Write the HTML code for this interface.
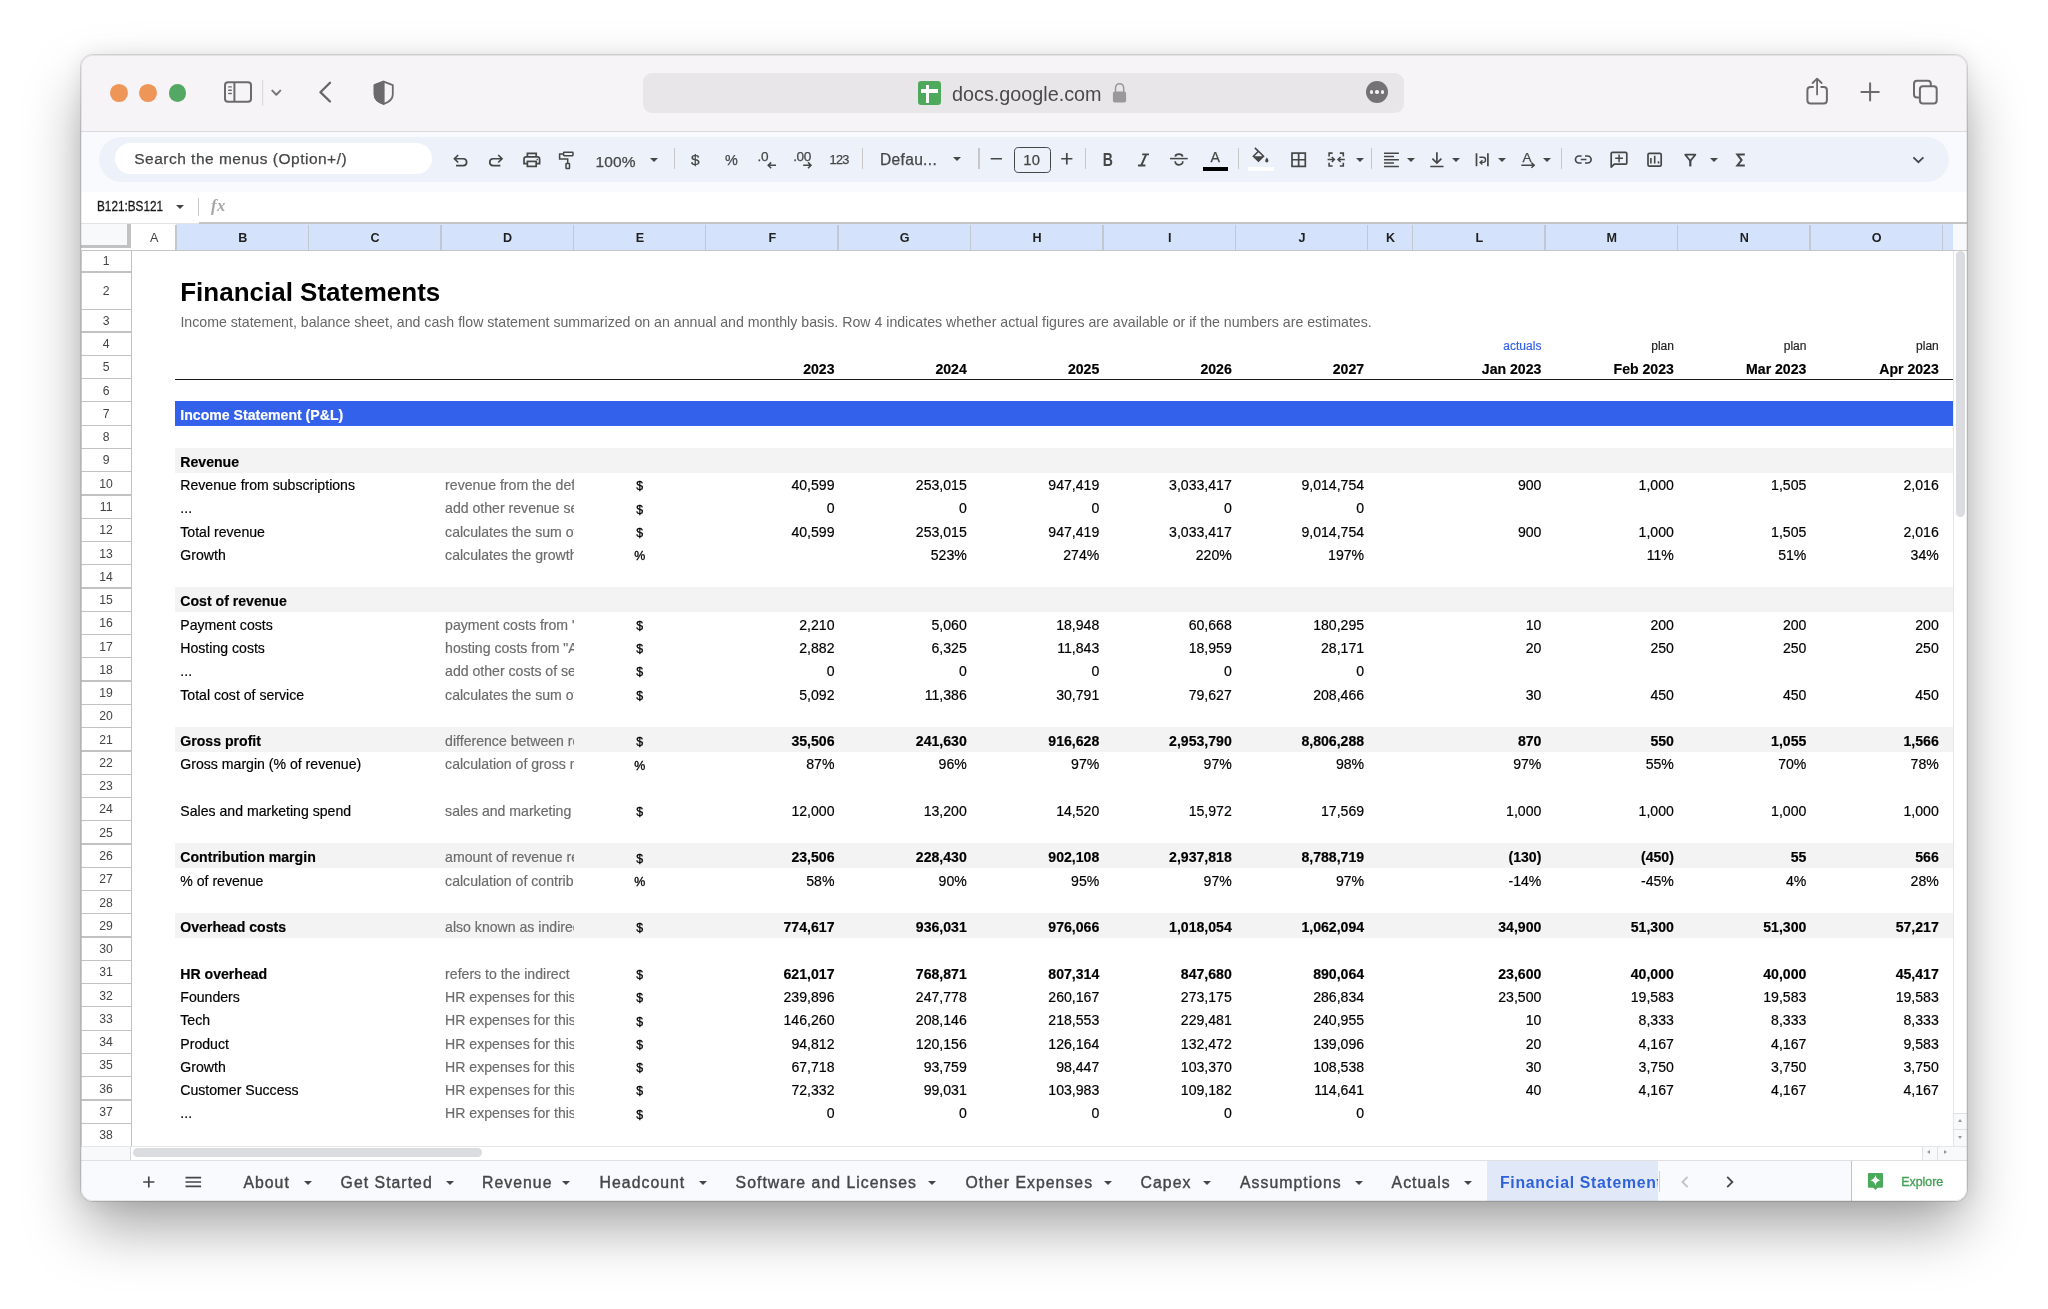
<!DOCTYPE html>
<html lang="en"><head><meta charset="utf-8"><title>Financial Statements - Google Sheets</title>
<style>

html,body{margin:0;padding:0;background:#fff;}
body{width:2048px;height:1309px;position:relative;overflow:hidden;font-family:"Liberation Sans",sans-serif;color:#000;}
.shadow{position:absolute;left:81px;top:55px;width:1886px;height:1146px;border-radius:12px;
  box-shadow:0 0 0 1px rgba(0,0,0,.12),0 29px 60px -4px rgba(0,0,0,.37),0 0 20px rgba(0,0,0,.08);background:#fff;}
.ring{position:absolute;left:81px;top:55px;width:1886px;height:1146px;border-radius:12px;box-shadow:inset 0 0 0 1px rgba(0,0,0,.07);pointer-events:none;}
.clip{will-change:transform;position:absolute;left:0;top:0;width:2048px;height:1309px;clip-path:inset(55px 81px 108px 81px round 12px);background:#fff;}
.a{position:absolute;}
.t{position:absolute;white-space:nowrap;line-height:1;}
svg{position:absolute;overflow:visible;}
.c{position:absolute;white-space:nowrap;font-size:14.1px;line-height:16px;height:16px;-webkit-text-stroke:.18px currentColor;}
.r{text-align:right;}
.b{font-weight:700;}
.g{color:#6c6c6c;overflow:hidden;}
.rn{position:absolute;left:81.6px;width:49px;text-align:center;font-size:12.2px;color:#444;line-height:14px;height:14px;}
.rl{position:absolute;left:81px;width:50px;height:1.3px;background:#c2c2c2;}
.ch{position:absolute;top:225px;height:26px;text-align:center;font-size:12.6px;line-height:26px;color:#1f1f1f;font-weight:700;}
.cl{position:absolute;top:225px;width:1.4px;height:24.5px;background:#c3c7cf;}
.ic{stroke:#444746;fill:none;stroke-width:1.7;stroke-linecap:butt;stroke-linejoin:miter;}
.if{fill:#444746;stroke:none;}
.sep{position:absolute;top:148px;width:1.2px;height:21px;background:#c7c7c7;}
.tb{position:absolute;white-space:nowrap;line-height:1;color:#444746;font-size:15.5px;-webkit-text-stroke:.25px #444746;}
.tab{position:absolute;top:1173.3px;white-space:nowrap;line-height:20px;height:20px;color:#444746;font-size:15.8px;letter-spacing:1.03px;-webkit-text-stroke:.4px #444746;}
.tri{position:absolute;width:0;height:0;border-left:4.3px solid transparent;border-right:4.3px solid transparent;border-top:4.4px solid #444746;}

</style></head>
<body>
<div class="shadow"></div>
<div class="clip">
<div class="a" style="left:81px;top:54px;width:1886px;height:77px;background:#f7f4f7;"></div>
<div class="a" style="left:81px;top:130.6px;width:1886px;height:1.2px;background:#dedbde;"></div>
<div class="a" style="left:110.3px;top:84.2px;width:17.8px;height:17.8px;border-radius:50%;background:#ee9558;"></div>
<div class="a" style="left:139.4px;top:84.2px;width:17.8px;height:17.8px;border-radius:50%;background:#ee9558;"></div>
<div class="a" style="left:168.6px;top:84.2px;width:17.8px;height:17.8px;border-radius:50%;background:#53a863;"></div>
<svg style="left:0;top:0" width="2048" height="140" viewBox="0 0 2048 140">
<g fill="none" stroke="#6b6b6b" stroke-width="2" stroke-linecap="round" stroke-linejoin="round">
<rect x="225" y="82.2" width="26" height="19.6" rx="3"/>
<path d="M234.4 82.4V101.6" stroke-linecap="butt"/>
<path d="M228.7 86.9H231.3M228.7 90.2H231.3M228.7 93.5H231.3" stroke-width="1.4"/>
<path d="M272.3 90.6L276.3 94.7L280.3 90.6" stroke="#777" stroke-width="2"/>
<path d="M330 82.8L320.4 92.2L330 101.5" stroke="#666" stroke-width="2.3"/>
</g>
<path d="M262.6 80V105.5" stroke="#dcd9dc" stroke-width="1.2"/>
<!-- shield -->
<path d="M383.7 81.6 L392.8 85.2 V94.5 C392.8 99.2 388.6 102.2 383.7 103.9 C378.8 102.2 374.6 99.2 374.6 94.5 V85.2 Z" fill="none" stroke="#6b6b6b" stroke-width="1.8" stroke-linejoin="round"/>
<path d="M383.7 81.6 L374.6 85.2 V94.5 C374.6 99.2 378.8 102.2 383.7 103.9 Z" fill="#6b6b6b" stroke="#6b6b6b" stroke-width="1.8" stroke-linejoin="round"/>
<!-- share -->
<g fill="none" stroke="#6b6b6b" stroke-width="2" stroke-linecap="round" stroke-linejoin="round">
<path d="M1813 87H1810.6C1808.8 87 1807.4 88.4 1807.4 90.2V100.2C1807.4 102 1808.8 103.4 1810.6 103.4H1823.7C1825.5 103.4 1826.9 102 1826.9 100.2V90.2C1826.9 88.4 1825.5 87 1823.7 87H1821.3"/>
<path d="M1817.1 94.4V79.2M1812.6 83L1817.1 78.6L1821.6 83" stroke-width="1.8"/>
<path d="M1861.4 91.9H1878.8M1870.1 83.2V100.6"/>
<rect x="1914" y="80.8" width="16.8" height="16.8" rx="3"/>
<rect x="1919.9" y="86.3" width="16.8" height="17.1" rx="3" fill="#f7f4f7"/>
</g>
</svg>
<div class="a" style="left:643px;top:73px;width:761px;height:40px;border-radius:9px;background:#e9e6ea;"></div>
<div class="a" style="left:917.8px;top:81.4px;width:23.2px;height:23.4px;border-radius:3.2px;background:#4fa95c;"></div>
<div class="a" style="left:925.8px;top:84.6px;width:3.1px;height:18px;background:#fff;"></div>
<div class="a" style="left:920.9px;top:89.3px;width:17.1px;height:3.5px;background:#fff;"></div>
<div class="t" style="left:952px;top:82.6px;font-size:19.8px;color:#4a4a4a;line-height:23px;">docs.google.com</div>
<svg style="left:1108px;top:80px" width="24" height="26" viewBox="1108 80 24 26">
<rect x="1112.9" y="91.4" width="13.2" height="11.2" rx="2" fill="#9a989b"/>
<path d="M1115.5 92V88.6C1115.5 85.6 1117.2 83.7 1119.6 83.7C1122 83.7 1123.7 85.6 1123.7 88.6V92" fill="none" stroke="#9a989b" stroke-width="1.5"/>
</svg>
<div class="a" style="left:1365.8px;top:81px;width:22.2px;height:22.2px;border-radius:50%;background:#737373;"></div>
<div class="a" style="left:1369.9px;top:90.4px;width:3.4px;height:3.4px;border-radius:50%;background:#f4f1f4;"></div>
<div class="a" style="left:1375.2px;top:90.4px;width:3.4px;height:3.4px;border-radius:50%;background:#f4f1f4;"></div>
<div class="a" style="left:1380.5px;top:90.4px;width:3.4px;height:3.4px;border-radius:50%;background:#f4f1f4;"></div>
<div class="a" style="left:81px;top:131.8px;width:1886px;height:60px;background:#f9fafd;"></div>
<div class="a" style="left:99px;top:137.2px;width:1850px;height:45.2px;border-radius:22.6px;background:#edf1fa;"></div>
<div class="a" style="left:115px;top:143px;width:317px;height:31px;border-radius:15.5px;background:#fff;"></div>
<div class="tb" style="left:134.2px;top:150.6px;letter-spacing:.5px;font-size:15.5px;">Search the menus (Option+/)</div>
<div class="sep" style="left:673.6px;"></div>
<div class="sep" style="left:861.7px;"></div>
<div class="sep" style="left:978.4px;"></div>
<div class="sep" style="left:1085.0px;"></div>
<div class="sep" style="left:1237.8px;"></div>
<div class="sep" style="left:1371.0px;"></div>
<div class="sep" style="left:1560.9px;"></div>
<div class="tri" style="left:952.6px;top:156.8px;"></div>
<div class="tri" style="left:649.9px;top:157.8px;"></div>
<div class="tri" style="left:1355.6px;top:157.8px;"></div>
<div class="tri" style="left:1406.8px;top:157.8px;"></div>
<div class="tri" style="left:1451.9px;top:157.8px;"></div>
<div class="tri" style="left:1497.7px;top:157.8px;"></div>
<div class="tri" style="left:1542.9px;top:157.8px;"></div>
<div class="tri" style="left:1709.8px;top:157.8px;"></div>
<div class="tb" style="left:595.6px;top:153.6px;font-size:15.5px;letter-spacing:.1px;">100%</div>
<div class="tb" style="left:691px;top:152.2px;font-size:15.4px;">$</div>
<div class="tb" style="left:725px;top:152.6px;font-size:14.4px;letter-spacing:-.3px;">%</div>
<div class="tb" style="left:757.6px;top:149.6px;font-size:13.6px;letter-spacing:-.4px;">.0</div>
<div class="tb" style="left:793.2px;top:149.6px;font-size:13.6px;letter-spacing:-.4px;">.00</div>
<div class="tb" style="left:829.6px;top:153.6px;font-size:12.7px;letter-spacing:-.75px;">123</div>
<div class="tb" style="left:880px;top:152.4px;font-size:15.6px;letter-spacing:.3px;">Defau...</div>
<div class="a" style="left:1013.8px;top:146.6px;width:35.4px;height:24px;border:1.2px solid #444746;border-radius:4.6px;"></div>
<div class="tb" style="left:1023.2px;top:153.4px;font-size:14.8px;letter-spacing:.3px;">10</div>
<div class="a" style="left:1203px;top:166.6px;width:25.2px;height:4.2px;background:#000;"></div>
<div class="a" style="left:1248.4px;top:166.5px;width:25.6px;height:4.3px;background:#fff;"></div>
<div class="tb" style="left:1210.4px;top:149.6px;font-size:14.2px;">A</div>
<div class="tb" style="left:1522.6px;top:150.8px;font-size:13.6px;">A</div>
<svg style="left:0;top:130px" width="2048" height="64" viewBox="0 130 2048 64">
<g class="ic">
<!-- undo -->
<path d="M456 165.6H463.4A3.43 3.43 0 0 0 463.4 158.75H455.2M458.2 155L454.4 158.75L458.2 162.5"/>
<!-- redo -->
<path d="M500.4 165.6H493A3.43 3.43 0 0 1 493 158.75H501.2M498.2 155L502 158.75L498.2 162.5"/>
<!-- print -->
<path d="M527.4 156.6V153.3H536.2V156.6"/>
<path d="M527.2 163.6H524V159.2C524 157.9 525 156.9 526.3 156.9H537.3C538.6 156.9 539.6 157.9 539.6 159.2V163.6H536.4"/>
<rect x="527.4" y="161.4" width="8.8" height="5" />
<!-- paint roller -->
<rect x="563.6" y="152.3" width="9.4" height="3.4" rx=".6" stroke-width="1.5"/>
<path d="M563.6 154H559.6V159.1H567.7V163.2" stroke-width="1.5"/>
<rect x="566" y="163.6" width="3.5" height="5" rx=".5" stroke-width="1.5"/>
<!-- decimals arrows -->
<path d="M776 165.3H768.4M771.2 162.4L768.2 165.3L771.2 168.2" stroke-width="1.5"/>
<path d="M803.2 165.3H810.8M808 162.4L811 165.3L808 168.2" stroke-width="1.5"/>
<!-- minus plus -->
<path d="M990.7 158.75H1002M1061.2 158.75H1072.4M1066.8 153.1V164.4"/>
<!-- italic -->
<path d="M1142.2 154.4H1149M1138 165.5H1145.4M1146.2 154.4L1141.2 165.5" stroke-width="1.9"/>
<!-- strike -->
<path d="M1170 158.6H1187.7" stroke-width="1.5"/>
<path d="M1182.6 156.6C1182.4 154.9 1181 154.2 1179 154.2C1177 154.2 1175.4 155 1175.3 156.6M1175.2 161.2C1175.3 163.6 1177 164.8 1179 164.8C1181.2 164.8 1182.9 163.7 1182.8 161.2" stroke-width="1.7"/>
<!-- bucket -->
<path d="M1254.9 147.9L1258.5 151.3M1258.5 151.3L1263.5 156.3L1258.5 161.1L1253.4 156.3Z" stroke-width="1.6"/>
<!-- borders -->
<rect x="1292" y="153.1" width="13.3" height="13.3"/>
<path d="M1298.65 153.1V166.4M1292 159.75H1305.3"/>
<!-- merge -->
<path d="M1332.6 153.1H1329.1V156.4M1339.8 153.1H1343.3V156.4M1329.1 162.8V166H1332.6M1343.3 162.8V166H1339.8" stroke-width="1.6"/>
<path d="M1327.6 159.5H1334.2M1331.8 157L1334.4 159.5L1331.8 162M1344.8 159.5H1338.2M1340.6 157L1338 159.5L1340.6 162" stroke-width="1.5"/>
<!-- align -->
<path d="M1384 153.2H1398.9M1384 156.5H1394M1384 159.8H1398.9M1384 163.1H1394M1384 166.4H1398.9" stroke-width="1.5"/>
<!-- valign -->
<path d="M1436.9 152.3V162.6M1432.4 158.6L1436.9 163.1L1441.4 158.6M1430.3 166.5H1443.5"/>
<!-- wrap -->
<path d="M1476.5 153.2V166.2M1487.9 153.2V166.2"/>
<path d="M1479.4 157.3H1483A2.55 2.55 0 0 1 1483 162.4H1480.4M1482.4 160.2L1480.1 162.4L1482.4 164.6" stroke-width="1.4"/>
<!-- rotate arrow -->
<path d="M1521.3 165.2H1533.6M1531.4 162.6L1534.2 165.2L1531.4 167.8" stroke-width="1.5"/>
<!-- link -->
<path d="M1581.6 156H1579A3.5 3.5 0 0 0 1579 163H1581.6M1585 156H1587.6A3.5 3.5 0 0 1 1587.6 163H1585M1580.8 159.5H1586.4"/>
<!-- comment -->
<path d="M1611.2 167.2V153.6C1611.2 152.9 1611.7 152.4 1612.4 152.4H1625.6C1626.3 152.4 1626.8 152.9 1626.8 153.6V162.9C1626.8 163.6 1626.3 164.1 1625.6 164.1H1614.3Z" stroke-linejoin="round"/>
<path d="M1615.2 158.3H1623M1619.1 154.4V162.2" stroke-width="1.5"/>
<!-- chart -->
<rect x="1648" y="153.3" width="13.2" height="12.8" rx="1.4"/>
<path d="M1650.9 158V163.6M1654.7 155.8V163.6M1658.5 161.3V163.6" stroke-width="1.6"/>
<!-- filter -->
<path d="M1685.2 154.6H1695.4L1690.3 161Z" stroke-linejoin="round"/>
<path d="M1690.3 160.4V166.4" stroke-width="2.2"/>
<!-- sigma -->
<path d="M1744.8 154.6H1737.4L1741.6 160.1L1737.4 165.5H1744.8" stroke-width="2"/>
<!-- chevron -->
<path d="M1913.4 157.4L1918.4 162.2L1923.4 157.4" stroke-width="1.8"/>
</g>
<g class="if">
<circle cx="537.3" cy="159.5" r=".8"/>
<path d="M1253.4 156.3H1263.5L1258.5 161.1Z"/>
<path d="M1266.8 157.6C1267.8 159 1268.4 159.9 1268.4 160.8A1.6 1.6 0 0 1 1265.2 160.8C1265.2 159.9 1265.8 159 1266.8 157.6Z"/>
</g>
<text x="0" y="0" transform="translate(1102.8 165.9) scale(.8 1)" font-family="Liberation Sans, sans-serif" font-weight="700" font-size="17.6" fill="#444746">B</text>
</svg>
<div class="a" style="left:81px;top:191.8px;width:1886px;height:31px;background:#fff;"></div>
<div class="t" style="left:97px;top:198.2px;font-size:14.9px;transform:scaleX(.79);transform-origin:0 0;color:#1a1a1a;line-height:16px;-webkit-text-stroke:.3px #1a1a1a;">B121:BS121</div>
<div class="tri" style="left:176.2px;top:204.6px;border-top-color:#444;"></div>
<div class="a" style="left:198px;top:198px;width:1.1px;height:18px;background:#c7c7c7;"></div>
<div class="t" style="left:211px;top:196.8px;font-family:'Liberation Serif',serif;font-style:italic;font-weight:700;font-size:16.6px;color:#a6a6a6;letter-spacing:.5px;line-height:18px;">fx</div>
<div class="a" style="left:81px;top:222.6px;width:1886px;height:924px;background:#fff;"></div>
<div class="a" style="left:81px;top:222.5px;width:118px;height:1px;background:#e3e3e3;"></div>
<div class="a" style="left:199px;top:222.3px;width:1768px;height:1.7px;background:#c4c4c4;"></div>
<div class="a" style="left:81px;top:224px;width:46.6px;height:21.2px;background:#f8f9fa;"></div>
<div class="a" style="left:127.4px;top:224px;width:3.6px;height:24.4px;background:#c2c2c2;"></div>
<div class="a" style="left:81px;top:245.2px;width:50px;height:3.2px;background:#c2c2c2;"></div>
<div class="a" style="left:131px;top:224px;width:44.7px;height:25.4px;background:#fff;"></div>
<div class="a" style="left:175.7px;top:224px;width:1777.3px;height:25.8px;background:#d5e2fb;"></div>
<div class="a" style="left:81px;top:249.5px;width:1886px;height:1.3px;background:#c4c4c4;"></div>
<div class="ch" style="left:131.9px;width:44.7px;font-weight:400;color:#444;">A</div>
<div class="cl" style="left:175.4px;"></div>
<div class="ch" style="left:176.6px;width:132.3px;">B</div>
<div class="cl" style="left:307.7px;"></div>
<div class="ch" style="left:308.9px;width:132.5px;">C</div>
<div class="cl" style="left:440.2px;"></div>
<div class="ch" style="left:441.4px;width:132.3px;">D</div>
<div class="cl" style="left:572.5px;"></div>
<div class="ch" style="left:573.7px;width:132.5px;">E</div>
<div class="cl" style="left:705.0px;"></div>
<div class="ch" style="left:706.2px;width:132.4px;">F</div>
<div class="cl" style="left:837.4px;"></div>
<div class="ch" style="left:838.6px;width:132.3px;">G</div>
<div class="cl" style="left:969.7px;"></div>
<div class="ch" style="left:970.9px;width:132.5px;">H</div>
<div class="cl" style="left:1102.2px;"></div>
<div class="ch" style="left:1103.4px;width:132.5px;">I</div>
<div class="cl" style="left:1234.7px;"></div>
<div class="ch" style="left:1235.9px;width:132.3px;">J</div>
<div class="cl" style="left:1367.0px;"></div>
<div class="ch" style="left:1368.2px;width:44.8px;">K</div>
<div class="cl" style="left:1411.8px;"></div>
<div class="ch" style="left:1413.0px;width:132.5px;">L</div>
<div class="cl" style="left:1544.3px;"></div>
<div class="ch" style="left:1545.5px;width:132.5px;">M</div>
<div class="cl" style="left:1676.8px;"></div>
<div class="ch" style="left:1678.0px;width:132.5px;">N</div>
<div class="cl" style="left:1809.3px;"></div>
<div class="ch" style="left:1810.5px;width:132.4px;">O</div>
<div class="cl" style="left:1941.7px;"></div>
<div class="a" style="left:130.6px;top:250px;width:1.4px;height:897px;background:#c2c2c2;"></div>
<div class="a" style="left:81px;top:250px;width:1px;height:897px;background:#d9d9d9;"></div>
<div class="rn" style="top:253.93px;">1</div>
<div class="rl" style="top:271.4px;"></div>
<div class="rn" style="top:283.93px;">2</div>
<div class="rl" style="top:308.9px;"></div>
<div class="rn" style="top:313.93px;">3</div>
<div class="rl" style="top:331.4px;"></div>
<div class="rn" style="top:336.93px;">4</div>
<div class="rl" style="top:354.7px;"></div>
<div class="rn" style="top:359.93px;">5</div>
<div class="rl" style="top:377.9px;"></div>
<div class="rn" style="top:383.93px;">6</div>
<div class="rl" style="top:401.2px;"></div>
<div class="rn" style="top:406.93px;">7</div>
<div class="rl" style="top:424.5px;"></div>
<div class="rn" style="top:429.93px;">8</div>
<div class="rl" style="top:447.8px;"></div>
<div class="rn" style="top:452.93px;">9</div>
<div class="rl" style="top:471.0px;"></div>
<div class="rn" style="top:476.93px;">10</div>
<div class="rl" style="top:494.3px;"></div>
<div class="rn" style="top:499.93px;">11</div>
<div class="rl" style="top:517.6px;"></div>
<div class="rn" style="top:522.93px;">12</div>
<div class="rl" style="top:540.8px;"></div>
<div class="rn" style="top:546.93px;">13</div>
<div class="rl" style="top:564.1px;"></div>
<div class="rn" style="top:569.93px;">14</div>
<div class="rl" style="top:587.4px;"></div>
<div class="rn" style="top:592.93px;">15</div>
<div class="rl" style="top:610.6px;"></div>
<div class="rn" style="top:615.93px;">16</div>
<div class="rl" style="top:633.9px;"></div>
<div class="rn" style="top:639.93px;">17</div>
<div class="rl" style="top:657.2px;"></div>
<div class="rn" style="top:662.93px;">18</div>
<div class="rl" style="top:680.4px;"></div>
<div class="rn" style="top:685.93px;">19</div>
<div class="rl" style="top:703.7px;"></div>
<div class="rn" style="top:708.93px;">20</div>
<div class="rl" style="top:727.0px;"></div>
<div class="rn" style="top:732.93px;">21</div>
<div class="rl" style="top:750.3px;"></div>
<div class="rn" style="top:755.93px;">22</div>
<div class="rl" style="top:773.5px;"></div>
<div class="rn" style="top:778.93px;">23</div>
<div class="rl" style="top:796.8px;"></div>
<div class="rn" style="top:801.93px;">24</div>
<div class="rl" style="top:820.1px;"></div>
<div class="rn" style="top:825.93px;">25</div>
<div class="rl" style="top:843.3px;"></div>
<div class="rn" style="top:848.93px;">26</div>
<div class="rl" style="top:866.6px;"></div>
<div class="rn" style="top:871.93px;">27</div>
<div class="rl" style="top:889.9px;"></div>
<div class="rn" style="top:895.93px;">28</div>
<div class="rl" style="top:913.1px;"></div>
<div class="rn" style="top:918.93px;">29</div>
<div class="rl" style="top:936.4px;"></div>
<div class="rn" style="top:941.93px;">30</div>
<div class="rl" style="top:959.7px;"></div>
<div class="rn" style="top:964.93px;">31</div>
<div class="rl" style="top:983.0px;"></div>
<div class="rn" style="top:988.93px;">32</div>
<div class="rl" style="top:1006.2px;"></div>
<div class="rn" style="top:1011.93px;">33</div>
<div class="rl" style="top:1029.5px;"></div>
<div class="rn" style="top:1034.93px;">34</div>
<div class="rl" style="top:1052.8px;"></div>
<div class="rn" style="top:1057.93px;">35</div>
<div class="rl" style="top:1076.0px;"></div>
<div class="rn" style="top:1081.93px;">36</div>
<div class="rl" style="top:1099.3px;"></div>
<div class="rn" style="top:1104.93px;">37</div>
<div class="rl" style="top:1122.6px;"></div>
<div class="rn" style="top:1127.93px;">38</div>
<div class="rl" style="top:1145.8px;"></div>
<div class="a" style="left:175px;top:401px;width:1778.0px;height:25px;background:#3461eb;"></div>
<div class="a" style="left:175px;top:448px;width:1778.0px;height:25px;background:#f3f3f3;"></div>
<div class="a" style="left:175px;top:587px;width:1778.0px;height:25px;background:#f3f3f3;"></div>
<div class="a" style="left:175px;top:727px;width:1778.0px;height:25px;background:#f3f3f3;"></div>
<div class="a" style="left:175px;top:843px;width:1778.0px;height:25px;background:#f3f3f3;"></div>
<div class="a" style="left:175px;top:913px;width:1778.0px;height:25px;background:#f3f3f3;"></div>
<div class="t b" style="left:180.2px;top:277px;font-size:26px;line-height:30px;">Financial Statements</div>
<div class="t" style="left:180.4px;top:314.2px;font-size:14.16px;line-height:16px;color:#666;">Income statement, balance sheet, and cash flow statement summarized on an annual and monthly basis. Row 4 indicates whether actual figures are available or if the numbers are estimates.</div>
<div class="c r" style="left:1412.1px;width:129.3px;top:337.93px;font-size:12px;color:#3461eb;">actuals</div>
<div class="c r" style="left:1544.6px;width:129.3px;top:337.93px;font-size:12px;color:#222;">plan</div>
<div class="c r" style="left:1677.1px;width:129.3px;top:337.93px;font-size:12px;color:#222;">plan</div>
<div class="c r" style="left:1809.6px;width:129.2px;top:337.93px;font-size:12px;color:#222;">plan</div>
<div class="c r b" style="left:705.3px;width:129.2px;top:360.93px;">2023</div>
<div class="c r b" style="left:837.7px;width:129.1px;top:360.93px;">2024</div>
<div class="c r b" style="left:970.0px;width:129.3px;top:360.93px;">2025</div>
<div class="c r b" style="left:1102.5px;width:129.3px;top:360.93px;">2026</div>
<div class="c r b" style="left:1235.0px;width:129.1px;top:360.93px;">2027</div>
<div class="c r b" style="left:1412.1px;width:129.3px;top:360.93px;">Jan 2023</div>
<div class="c r b" style="left:1544.6px;width:129.3px;top:360.93px;">Feb 2023</div>
<div class="c r b" style="left:1677.1px;width:129.3px;top:360.93px;">Mar 2023</div>
<div class="c r b" style="left:1809.6px;width:129.2px;top:360.93px;">Apr 2023</div>
<div class="a" style="left:175px;top:378.5px;width:1778px;height:1.7px;background:#1a1a1a;"></div>
<div class="c b" style="left:180.3px;top:406.93px;color:#fff;">Income Statement (P&amp;L)</div>
<div class="c b" style="left:180.3px;top:453.93px;">Revenue</div>
<div class="c" style="left:180.3px;top:476.93px;">Revenue from subscriptions</div>
<div class="c g" style="left:445.1px;width:128.9px;top:476.93px;">revenue from the default subscription plans</div>
<div class="c" style="left:573.5px;width:132.5px;text-align:center;top:477.93px;font-size:12.4px;-webkit-text-stroke:.3px #000;">$</div>
<div class="c r" style="left:705.3px;width:129.2px;top:476.93px;">40,599</div>
<div class="c r" style="left:837.7px;width:129.1px;top:476.93px;">253,015</div>
<div class="c r" style="left:970.0px;width:129.3px;top:476.93px;">947,419</div>
<div class="c r" style="left:1102.5px;width:129.3px;top:476.93px;">3,033,417</div>
<div class="c r" style="left:1235.0px;width:129.1px;top:476.93px;">9,014,754</div>
<div class="c r" style="left:1412.1px;width:129.3px;top:476.93px;">900</div>
<div class="c r" style="left:1544.6px;width:129.3px;top:476.93px;">1,000</div>
<div class="c r" style="left:1677.1px;width:129.3px;top:476.93px;">1,505</div>
<div class="c r" style="left:1809.6px;width:129.2px;top:476.93px;">2,016</div>
<div class="c" style="left:180.3px;top:499.93px;">...</div>
<div class="c g" style="left:445.1px;width:128.9px;top:499.93px;">add other revenue segments here</div>
<div class="c" style="left:573.5px;width:132.5px;text-align:center;top:501.93px;font-size:12.4px;-webkit-text-stroke:.3px #000;">$</div>
<div class="c r" style="left:705.3px;width:129.2px;top:499.93px;">0</div>
<div class="c r" style="left:837.7px;width:129.1px;top:499.93px;">0</div>
<div class="c r" style="left:970.0px;width:129.3px;top:499.93px;">0</div>
<div class="c r" style="left:1102.5px;width:129.3px;top:499.93px;">0</div>
<div class="c r" style="left:1235.0px;width:129.1px;top:499.93px;">0</div>
<div class="c" style="left:180.3px;top:523.93px;">Total revenue</div>
<div class="c g" style="left:445.1px;width:128.9px;top:523.93px;">calculates the sum of all revenue</div>
<div class="c" style="left:573.5px;width:132.5px;text-align:center;top:524.93px;font-size:12.4px;-webkit-text-stroke:.3px #000;">$</div>
<div class="c r" style="left:705.3px;width:129.2px;top:523.93px;">40,599</div>
<div class="c r" style="left:837.7px;width:129.1px;top:523.93px;">253,015</div>
<div class="c r" style="left:970.0px;width:129.3px;top:523.93px;">947,419</div>
<div class="c r" style="left:1102.5px;width:129.3px;top:523.93px;">3,033,417</div>
<div class="c r" style="left:1235.0px;width:129.1px;top:523.93px;">9,014,754</div>
<div class="c r" style="left:1412.1px;width:129.3px;top:523.93px;">900</div>
<div class="c r" style="left:1544.6px;width:129.3px;top:523.93px;">1,000</div>
<div class="c r" style="left:1677.1px;width:129.3px;top:523.93px;">1,505</div>
<div class="c r" style="left:1809.6px;width:129.2px;top:523.93px;">2,016</div>
<div class="c" style="left:180.3px;top:546.93px;">Growth</div>
<div class="c g" style="left:445.1px;width:128.9px;top:546.93px;">calculates the growth rate</div>
<div class="c" style="left:573.5px;width:132.5px;text-align:center;top:547.93px;font-size:12.4px;-webkit-text-stroke:.3px #000;">%</div>
<div class="c r" style="left:837.7px;width:129.1px;top:546.93px;">523%</div>
<div class="c r" style="left:970.0px;width:129.3px;top:546.93px;">274%</div>
<div class="c r" style="left:1102.5px;width:129.3px;top:546.93px;">220%</div>
<div class="c r" style="left:1235.0px;width:129.1px;top:546.93px;">197%</div>
<div class="c r" style="left:1544.6px;width:129.3px;top:546.93px;">11%</div>
<div class="c r" style="left:1677.1px;width:129.3px;top:546.93px;">51%</div>
<div class="c r" style="left:1809.6px;width:129.2px;top:546.93px;">34%</div>
<div class="c b" style="left:180.3px;top:592.93px;">Cost of revenue</div>
<div class="c" style="left:180.3px;top:616.93px;">Payment costs</div>
<div class="c g" style="left:445.1px;width:128.9px;top:616.93px;">payment costs from &quot;Assumptions&quot;</div>
<div class="c" style="left:573.5px;width:132.5px;text-align:center;top:617.93px;font-size:12.4px;-webkit-text-stroke:.3px #000;">$</div>
<div class="c r" style="left:705.3px;width:129.2px;top:616.93px;">2,210</div>
<div class="c r" style="left:837.7px;width:129.1px;top:616.93px;">5,060</div>
<div class="c r" style="left:970.0px;width:129.3px;top:616.93px;">18,948</div>
<div class="c r" style="left:1102.5px;width:129.3px;top:616.93px;">60,668</div>
<div class="c r" style="left:1235.0px;width:129.1px;top:616.93px;">180,295</div>
<div class="c r" style="left:1412.1px;width:129.3px;top:616.93px;">10</div>
<div class="c r" style="left:1544.6px;width:129.3px;top:616.93px;">200</div>
<div class="c r" style="left:1677.1px;width:129.3px;top:616.93px;">200</div>
<div class="c r" style="left:1809.6px;width:129.2px;top:616.93px;">200</div>
<div class="c" style="left:180.3px;top:639.93px;">Hosting costs</div>
<div class="c g" style="left:445.1px;width:128.9px;top:639.93px;">hosting costs from &quot;Assumptions&quot;</div>
<div class="c" style="left:573.5px;width:132.5px;text-align:center;top:640.93px;font-size:12.4px;-webkit-text-stroke:.3px #000;">$</div>
<div class="c r" style="left:705.3px;width:129.2px;top:639.93px;">2,882</div>
<div class="c r" style="left:837.7px;width:129.1px;top:639.93px;">6,325</div>
<div class="c r" style="left:970.0px;width:129.3px;top:639.93px;">11,843</div>
<div class="c r" style="left:1102.5px;width:129.3px;top:639.93px;">18,959</div>
<div class="c r" style="left:1235.0px;width:129.1px;top:639.93px;">28,171</div>
<div class="c r" style="left:1412.1px;width:129.3px;top:639.93px;">20</div>
<div class="c r" style="left:1544.6px;width:129.3px;top:639.93px;">250</div>
<div class="c r" style="left:1677.1px;width:129.3px;top:639.93px;">250</div>
<div class="c r" style="left:1809.6px;width:129.2px;top:639.93px;">250</div>
<div class="c" style="left:180.3px;top:662.93px;">...</div>
<div class="c g" style="left:445.1px;width:128.9px;top:662.93px;">add other costs of service here</div>
<div class="c" style="left:573.5px;width:132.5px;text-align:center;top:663.93px;font-size:12.4px;-webkit-text-stroke:.3px #000;">$</div>
<div class="c r" style="left:705.3px;width:129.2px;top:662.93px;">0</div>
<div class="c r" style="left:837.7px;width:129.1px;top:662.93px;">0</div>
<div class="c r" style="left:970.0px;width:129.3px;top:662.93px;">0</div>
<div class="c r" style="left:1102.5px;width:129.3px;top:662.93px;">0</div>
<div class="c r" style="left:1235.0px;width:129.1px;top:662.93px;">0</div>
<div class="c" style="left:180.3px;top:686.93px;">Total cost of service</div>
<div class="c g" style="left:445.1px;width:128.9px;top:686.93px;">calculates the sum of all costs</div>
<div class="c" style="left:573.5px;width:132.5px;text-align:center;top:687.93px;font-size:12.4px;-webkit-text-stroke:.3px #000;">$</div>
<div class="c r" style="left:705.3px;width:129.2px;top:686.93px;">5,092</div>
<div class="c r" style="left:837.7px;width:129.1px;top:686.93px;">11,386</div>
<div class="c r" style="left:970.0px;width:129.3px;top:686.93px;">30,791</div>
<div class="c r" style="left:1102.5px;width:129.3px;top:686.93px;">79,627</div>
<div class="c r" style="left:1235.0px;width:129.1px;top:686.93px;">208,466</div>
<div class="c r" style="left:1412.1px;width:129.3px;top:686.93px;">30</div>
<div class="c r" style="left:1544.6px;width:129.3px;top:686.93px;">450</div>
<div class="c r" style="left:1677.1px;width:129.3px;top:686.93px;">450</div>
<div class="c r" style="left:1809.6px;width:129.2px;top:686.93px;">450</div>
<div class="c b" style="left:180.3px;top:732.93px;">Gross profit</div>
<div class="c g" style="left:445.1px;width:128.9px;top:732.93px;">difference between revenue and cost</div>
<div class="c" style="left:573.5px;width:132.5px;text-align:center;top:733.93px;font-size:12.4px;-webkit-text-stroke:.3px #000;">$</div>
<div class="c r b" style="left:705.3px;width:129.2px;top:732.93px;">35,506</div>
<div class="c r b" style="left:837.7px;width:129.1px;top:732.93px;">241,630</div>
<div class="c r b" style="left:970.0px;width:129.3px;top:732.93px;">916,628</div>
<div class="c r b" style="left:1102.5px;width:129.3px;top:732.93px;">2,953,790</div>
<div class="c r b" style="left:1235.0px;width:129.1px;top:732.93px;">8,806,288</div>
<div class="c r b" style="left:1412.1px;width:129.3px;top:732.93px;">870</div>
<div class="c r b" style="left:1544.6px;width:129.3px;top:732.93px;">550</div>
<div class="c r b" style="left:1677.1px;width:129.3px;top:732.93px;">1,055</div>
<div class="c r b" style="left:1809.6px;width:129.2px;top:732.93px;">1,566</div>
<div class="c" style="left:180.3px;top:755.93px;">Gross margin (% of revenue)</div>
<div class="c g" style="left:445.1px;width:128.9px;top:755.93px;">calculation of gross margin</div>
<div class="c" style="left:573.5px;width:132.5px;text-align:center;top:757.93px;font-size:12.4px;-webkit-text-stroke:.3px #000;">%</div>
<div class="c r" style="left:705.3px;width:129.2px;top:755.93px;">87%</div>
<div class="c r" style="left:837.7px;width:129.1px;top:755.93px;">96%</div>
<div class="c r" style="left:970.0px;width:129.3px;top:755.93px;">97%</div>
<div class="c r" style="left:1102.5px;width:129.3px;top:755.93px;">97%</div>
<div class="c r" style="left:1235.0px;width:129.1px;top:755.93px;">98%</div>
<div class="c r" style="left:1412.1px;width:129.3px;top:755.93px;">97%</div>
<div class="c r" style="left:1544.6px;width:129.3px;top:755.93px;">55%</div>
<div class="c r" style="left:1677.1px;width:129.3px;top:755.93px;">70%</div>
<div class="c r" style="left:1809.6px;width:129.2px;top:755.93px;">78%</div>
<div class="c" style="left:180.3px;top:802.93px;">Sales and marketing spend</div>
<div class="c g" style="left:445.1px;width:128.9px;top:802.93px;">sales and marketing</div>
<div class="c" style="left:573.5px;width:132.5px;text-align:center;top:803.93px;font-size:12.4px;-webkit-text-stroke:.3px #000;">$</div>
<div class="c r" style="left:705.3px;width:129.2px;top:802.93px;">12,000</div>
<div class="c r" style="left:837.7px;width:129.1px;top:802.93px;">13,200</div>
<div class="c r" style="left:970.0px;width:129.3px;top:802.93px;">14,520</div>
<div class="c r" style="left:1102.5px;width:129.3px;top:802.93px;">15,972</div>
<div class="c r" style="left:1235.0px;width:129.1px;top:802.93px;">17,569</div>
<div class="c r" style="left:1412.1px;width:129.3px;top:802.93px;">1,000</div>
<div class="c r" style="left:1544.6px;width:129.3px;top:802.93px;">1,000</div>
<div class="c r" style="left:1677.1px;width:129.3px;top:802.93px;">1,000</div>
<div class="c r" style="left:1809.6px;width:129.2px;top:802.93px;">1,000</div>
<div class="c b" style="left:180.3px;top:848.93px;">Contribution margin</div>
<div class="c g" style="left:445.1px;width:128.9px;top:848.93px;">amount of revenue remaining</div>
<div class="c" style="left:573.5px;width:132.5px;text-align:center;top:850.93px;font-size:12.4px;-webkit-text-stroke:.3px #000;">$</div>
<div class="c r b" style="left:705.3px;width:129.2px;top:848.93px;">23,506</div>
<div class="c r b" style="left:837.7px;width:129.1px;top:848.93px;">228,430</div>
<div class="c r b" style="left:970.0px;width:129.3px;top:848.93px;">902,108</div>
<div class="c r b" style="left:1102.5px;width:129.3px;top:848.93px;">2,937,818</div>
<div class="c r b" style="left:1235.0px;width:129.1px;top:848.93px;">8,788,719</div>
<div class="c r b" style="left:1412.1px;width:129.3px;top:848.93px;">(130)</div>
<div class="c r b" style="left:1544.6px;width:129.3px;top:848.93px;">(450)</div>
<div class="c r b" style="left:1677.1px;width:129.3px;top:848.93px;">55</div>
<div class="c r b" style="left:1809.6px;width:129.2px;top:848.93px;">566</div>
<div class="c" style="left:180.3px;top:872.93px;">% of revenue</div>
<div class="c g" style="left:445.1px;width:128.9px;top:872.93px;">calculation of contribution</div>
<div class="c" style="left:573.5px;width:132.5px;text-align:center;top:873.93px;font-size:12.4px;-webkit-text-stroke:.3px #000;">%</div>
<div class="c r" style="left:705.3px;width:129.2px;top:872.93px;">58%</div>
<div class="c r" style="left:837.7px;width:129.1px;top:872.93px;">90%</div>
<div class="c r" style="left:970.0px;width:129.3px;top:872.93px;">95%</div>
<div class="c r" style="left:1102.5px;width:129.3px;top:872.93px;">97%</div>
<div class="c r" style="left:1235.0px;width:129.1px;top:872.93px;">97%</div>
<div class="c r" style="left:1412.1px;width:129.3px;top:872.93px;">-14%</div>
<div class="c r" style="left:1544.6px;width:129.3px;top:872.93px;">-45%</div>
<div class="c r" style="left:1677.1px;width:129.3px;top:872.93px;">4%</div>
<div class="c r" style="left:1809.6px;width:129.2px;top:872.93px;">28%</div>
<div class="c b" style="left:180.3px;top:918.93px;">Overhead costs</div>
<div class="c g" style="left:445.1px;width:128.9px;top:918.93px;">also known as indirect costs</div>
<div class="c" style="left:573.5px;width:132.5px;text-align:center;top:919.93px;font-size:12.4px;-webkit-text-stroke:.3px #000;">$</div>
<div class="c r b" style="left:705.3px;width:129.2px;top:918.93px;">774,617</div>
<div class="c r b" style="left:837.7px;width:129.1px;top:918.93px;">936,031</div>
<div class="c r b" style="left:970.0px;width:129.3px;top:918.93px;">976,066</div>
<div class="c r b" style="left:1102.5px;width:129.3px;top:918.93px;">1,018,054</div>
<div class="c r b" style="left:1235.0px;width:129.1px;top:918.93px;">1,062,094</div>
<div class="c r b" style="left:1412.1px;width:129.3px;top:918.93px;">34,900</div>
<div class="c r b" style="left:1544.6px;width:129.3px;top:918.93px;">51,300</div>
<div class="c r b" style="left:1677.1px;width:129.3px;top:918.93px;">51,300</div>
<div class="c r b" style="left:1809.6px;width:129.2px;top:918.93px;">57,217</div>
<div class="c b" style="left:180.3px;top:965.93px;">HR overhead</div>
<div class="c g" style="left:445.1px;width:128.9px;top:965.93px;">refers to the indirect HR costs</div>
<div class="c" style="left:573.5px;width:132.5px;text-align:center;top:966.93px;font-size:12.4px;-webkit-text-stroke:.3px #000;">$</div>
<div class="c r b" style="left:705.3px;width:129.2px;top:965.93px;">621,017</div>
<div class="c r b" style="left:837.7px;width:129.1px;top:965.93px;">768,871</div>
<div class="c r b" style="left:970.0px;width:129.3px;top:965.93px;">807,314</div>
<div class="c r b" style="left:1102.5px;width:129.3px;top:965.93px;">847,680</div>
<div class="c r b" style="left:1235.0px;width:129.1px;top:965.93px;">890,064</div>
<div class="c r b" style="left:1412.1px;width:129.3px;top:965.93px;">23,600</div>
<div class="c r b" style="left:1544.6px;width:129.3px;top:965.93px;">40,000</div>
<div class="c r b" style="left:1677.1px;width:129.3px;top:965.93px;">40,000</div>
<div class="c r b" style="left:1809.6px;width:129.2px;top:965.93px;">45,417</div>
<div class="c" style="left:180.3px;top:988.93px;">Founders</div>
<div class="c g" style="left:445.1px;width:128.9px;top:988.93px;">HR expenses for this team</div>
<div class="c" style="left:573.5px;width:132.5px;text-align:center;top:989.93px;font-size:12.4px;-webkit-text-stroke:.3px #000;">$</div>
<div class="c r" style="left:705.3px;width:129.2px;top:988.93px;">239,896</div>
<div class="c r" style="left:837.7px;width:129.1px;top:988.93px;">247,778</div>
<div class="c r" style="left:970.0px;width:129.3px;top:988.93px;">260,167</div>
<div class="c r" style="left:1102.5px;width:129.3px;top:988.93px;">273,175</div>
<div class="c r" style="left:1235.0px;width:129.1px;top:988.93px;">286,834</div>
<div class="c r" style="left:1412.1px;width:129.3px;top:988.93px;">23,500</div>
<div class="c r" style="left:1544.6px;width:129.3px;top:988.93px;">19,583</div>
<div class="c r" style="left:1677.1px;width:129.3px;top:988.93px;">19,583</div>
<div class="c r" style="left:1809.6px;width:129.2px;top:988.93px;">19,583</div>
<div class="c" style="left:180.3px;top:1011.93px;">Tech</div>
<div class="c g" style="left:445.1px;width:128.9px;top:1011.93px;">HR expenses for this team</div>
<div class="c" style="left:573.5px;width:132.5px;text-align:center;top:1013.93px;font-size:12.4px;-webkit-text-stroke:.3px #000;">$</div>
<div class="c r" style="left:705.3px;width:129.2px;top:1011.93px;">146,260</div>
<div class="c r" style="left:837.7px;width:129.1px;top:1011.93px;">208,146</div>
<div class="c r" style="left:970.0px;width:129.3px;top:1011.93px;">218,553</div>
<div class="c r" style="left:1102.5px;width:129.3px;top:1011.93px;">229,481</div>
<div class="c r" style="left:1235.0px;width:129.1px;top:1011.93px;">240,955</div>
<div class="c r" style="left:1412.1px;width:129.3px;top:1011.93px;">10</div>
<div class="c r" style="left:1544.6px;width:129.3px;top:1011.93px;">8,333</div>
<div class="c r" style="left:1677.1px;width:129.3px;top:1011.93px;">8,333</div>
<div class="c r" style="left:1809.6px;width:129.2px;top:1011.93px;">8,333</div>
<div class="c" style="left:180.3px;top:1035.93px;">Product</div>
<div class="c g" style="left:445.1px;width:128.9px;top:1035.93px;">HR expenses for this team</div>
<div class="c" style="left:573.5px;width:132.5px;text-align:center;top:1036.93px;font-size:12.4px;-webkit-text-stroke:.3px #000;">$</div>
<div class="c r" style="left:705.3px;width:129.2px;top:1035.93px;">94,812</div>
<div class="c r" style="left:837.7px;width:129.1px;top:1035.93px;">120,156</div>
<div class="c r" style="left:970.0px;width:129.3px;top:1035.93px;">126,164</div>
<div class="c r" style="left:1102.5px;width:129.3px;top:1035.93px;">132,472</div>
<div class="c r" style="left:1235.0px;width:129.1px;top:1035.93px;">139,096</div>
<div class="c r" style="left:1412.1px;width:129.3px;top:1035.93px;">20</div>
<div class="c r" style="left:1544.6px;width:129.3px;top:1035.93px;">4,167</div>
<div class="c r" style="left:1677.1px;width:129.3px;top:1035.93px;">4,167</div>
<div class="c r" style="left:1809.6px;width:129.2px;top:1035.93px;">9,583</div>
<div class="c" style="left:180.3px;top:1058.93px;">Growth</div>
<div class="c g" style="left:445.1px;width:128.9px;top:1058.93px;">HR expenses for this team</div>
<div class="c" style="left:573.5px;width:132.5px;text-align:center;top:1059.93px;font-size:12.4px;-webkit-text-stroke:.3px #000;">$</div>
<div class="c r" style="left:705.3px;width:129.2px;top:1058.93px;">67,718</div>
<div class="c r" style="left:837.7px;width:129.1px;top:1058.93px;">93,759</div>
<div class="c r" style="left:970.0px;width:129.3px;top:1058.93px;">98,447</div>
<div class="c r" style="left:1102.5px;width:129.3px;top:1058.93px;">103,370</div>
<div class="c r" style="left:1235.0px;width:129.1px;top:1058.93px;">108,538</div>
<div class="c r" style="left:1412.1px;width:129.3px;top:1058.93px;">30</div>
<div class="c r" style="left:1544.6px;width:129.3px;top:1058.93px;">3,750</div>
<div class="c r" style="left:1677.1px;width:129.3px;top:1058.93px;">3,750</div>
<div class="c r" style="left:1809.6px;width:129.2px;top:1058.93px;">3,750</div>
<div class="c" style="left:180.3px;top:1081.93px;">Customer Success</div>
<div class="c g" style="left:445.1px;width:128.9px;top:1081.93px;">HR expenses for this team</div>
<div class="c" style="left:573.5px;width:132.5px;text-align:center;top:1082.93px;font-size:12.4px;-webkit-text-stroke:.3px #000;">$</div>
<div class="c r" style="left:705.3px;width:129.2px;top:1081.93px;">72,332</div>
<div class="c r" style="left:837.7px;width:129.1px;top:1081.93px;">99,031</div>
<div class="c r" style="left:970.0px;width:129.3px;top:1081.93px;">103,983</div>
<div class="c r" style="left:1102.5px;width:129.3px;top:1081.93px;">109,182</div>
<div class="c r" style="left:1235.0px;width:129.1px;top:1081.93px;">114,641</div>
<div class="c r" style="left:1412.1px;width:129.3px;top:1081.93px;">40</div>
<div class="c r" style="left:1544.6px;width:129.3px;top:1081.93px;">4,167</div>
<div class="c r" style="left:1677.1px;width:129.3px;top:1081.93px;">4,167</div>
<div class="c r" style="left:1809.6px;width:129.2px;top:1081.93px;">4,167</div>
<div class="c" style="left:180.3px;top:1104.93px;">...</div>
<div class="c g" style="left:445.1px;width:128.9px;top:1104.93px;">HR expenses for this team</div>
<div class="c" style="left:573.5px;width:132.5px;text-align:center;top:1106.93px;font-size:12.4px;-webkit-text-stroke:.3px #000;">$</div>
<div class="c r" style="left:705.3px;width:129.2px;top:1104.93px;">0</div>
<div class="c r" style="left:837.7px;width:129.1px;top:1104.93px;">0</div>
<div class="c r" style="left:970.0px;width:129.3px;top:1104.93px;">0</div>
<div class="c r" style="left:1102.5px;width:129.3px;top:1104.93px;">0</div>
<div class="c r" style="left:1235.0px;width:129.1px;top:1104.93px;">0</div>
<div class="a" style="left:1953px;top:224px;width:14px;height:923px;background:#fff;"></div>
<div class="a" style="left:1953px;top:224px;width:14px;height:26.4px;background:#f8f9fa;"></div>
<div class="a" style="left:1953px;top:250px;width:1px;height:897px;background:#e6e6e6;"></div>
<div class="a" style="left:1955.6px;top:251.4px;width:9.6px;height:266px;border-radius:5px;background:#dadce0;"></div>
<div class="a" style="left:1953.5px;top:1113.3px;width:13.5px;height:32px;background:#f8f9fa;border-top:1px solid #e0e0e0;"></div>
<div class="a" style="left:1953.5px;top:1129.2px;width:13.5px;height:1px;background:#e0e0e0;"></div>
<div class="a" style="left:1957.6px;top:1119.4px;width:0;height:0;border-left:2.8px solid transparent;border-right:2.8px solid transparent;border-bottom:3.2px solid #9a9a9a;"></div>
<div class="a" style="left:1957.6px;top:1136px;width:0;height:0;border-left:2.8px solid transparent;border-right:2.8px solid transparent;border-top:3.2px solid #9a9a9a;"></div>
<div class="a" style="left:1953px;top:249.5px;width:14px;height:1.3px;background:#c9c9c9;"></div>
<div class="a" style="left:81px;top:1146.2px;width:1886px;height:14px;background:#fff;border-top:1px solid #e6e6e6;"></div>
<div class="a" style="left:81px;top:1147px;width:49.4px;height:13.4px;background:#f8f9fa;"></div>
<div class="a" style="left:130.2px;top:1147px;width:1.2px;height:13.4px;background:#d8d8d8;"></div>
<div class="a" style="left:133.3px;top:1147.8px;width:349px;height:9.4px;border-radius:4.7px;background:#dadce0;"></div>
<div class="a" style="left:1921.7px;top:1147px;width:31.6px;height:13px;background:#f8f9fa;border-left:1px solid #e0e0e0;border-right:1px solid #e0e0e0;"></div>
<div class="a" style="left:1937.1px;top:1147px;width:1px;height:13px;background:#e0e0e0;"></div>
<div class="a" style="left:1953.5px;top:1147px;width:13.5px;height:13px;background:#f8f9fa;"></div>
<div class="a" style="left:1927.4px;top:1150.4px;width:0;height:0;border-top:2.8px solid transparent;border-bottom:2.8px solid transparent;border-right:3.2px solid #9a9a9a;"></div>
<div class="a" style="left:1943.8px;top:1150.4px;width:0;height:0;border-top:2.8px solid transparent;border-bottom:2.8px solid transparent;border-left:3.2px solid #9a9a9a;"></div>
<div class="a" style="left:81px;top:1160px;width:1886px;height:42px;background:#f9fafd;"></div>
<div class="a" style="left:1852px;top:1160px;width:115px;height:42px;background:#fff;"></div>
<div class="a" style="left:81px;top:1160px;width:1886px;height:1.2px;background:#e0e0e0;"></div>
<div class="a" style="left:1851px;top:1161px;width:1.1px;height:41px;background:#c4c4c4;"></div>
<div class="a" style="left:1487px;top:1161.4px;width:170.6px;height:40px;background:#e1e9f8;"></div>
<div class="tab" style="left:243.4px;">About</div>
<div class="tri" style="left:303.7px;top:1180.6px;"></div>
<div class="tab" style="left:340.6px;">Get Started</div>
<div class="tri" style="left:445.5px;top:1180.6px;"></div>
<div class="tab" style="left:482px;">Revenue</div>
<div class="tri" style="left:561.7px;top:1180.6px;"></div>
<div class="tab" style="left:599.6px;">Headcount</div>
<div class="tri" style="left:698.7px;top:1180.6px;"></div>
<div class="tab" style="left:735.6px;">Software and Licenses</div>
<div class="tri" style="left:927.7px;top:1180.6px;"></div>
<div class="tab" style="left:965.4px;">Other Expenses</div>
<div class="tri" style="left:1103.7px;top:1180.6px;"></div>
<div class="tab" style="left:1140.6px;">Capex</div>
<div class="tri" style="left:1202.7px;top:1180.6px;"></div>
<div class="tab" style="left:1240px;">Assumptions</div>
<div class="tri" style="left:1354.7px;top:1180.6px;"></div>
<div class="tab" style="left:1391.6px;">Actuals</div>
<div class="tri" style="left:1463.7px;top:1180.6px;"></div>
<div class="tab" style="left:1500px;width:157.6px;overflow:hidden;font-weight:700;color:#2f62d9;-webkit-text-stroke:0;letter-spacing:.7px;">Financial Statements</div>
<div class="a" style="left:1659.4px;top:1171px;width:1px;height:21px;background:#cfcfcf;"></div>
<svg style="left:0;top:1160px" width="2048" height="42" viewBox="0 1160 2048 42">
<g fill="none" stroke="#444746" stroke-width="1.7">
<path d="M143.2 1182H154.4M148.8 1176.4V1187.6"/>
<path d="M185.5 1177.6H201.1M185.5 1182H201.1M185.5 1186.4H201.1" stroke-width="1.6"/>
<path d="M1727.2 1176.8L1732.4 1182L1727.2 1187.2" stroke-width="1.8"/>
<path d="M1687.6 1176.8L1682.4 1182L1687.6 1187.2" stroke="#c2c2c2" stroke-width="1.8"/>
</g>
<path d="M1868.9 1172.9H1882A1 1 0 0 1 1883 1173.9V1186.8A1 1 0 0 1 1882 1187.8H1877.6L1875.45 1190L1873.3 1187.8H1868.9A1 1 0 0 1 1867.9 1186.8V1173.9A1 1 0 0 1 1868.9 1172.9Z" fill="#4aa95a"/>
<path d="M1875.45 1174.8C1876.2 1178.4 1877.3 1179.5 1880.9 1180.3C1877.3 1181.1 1876.2 1182.2 1875.45 1185.8C1874.7 1182.2 1873.6 1181.1 1870 1180.3C1873.6 1179.5 1874.7 1178.4 1875.45 1174.8Z" fill="#fff"/>
</svg>
<div class="t" style="left:1901.2px;top:1174.8px;font-size:12.4px;line-height:14px;color:#3f9f51;-webkit-text-stroke:.3px #3f9f51;">Explore</div>
</div>
<div class="ring"></div>
</body></html>
